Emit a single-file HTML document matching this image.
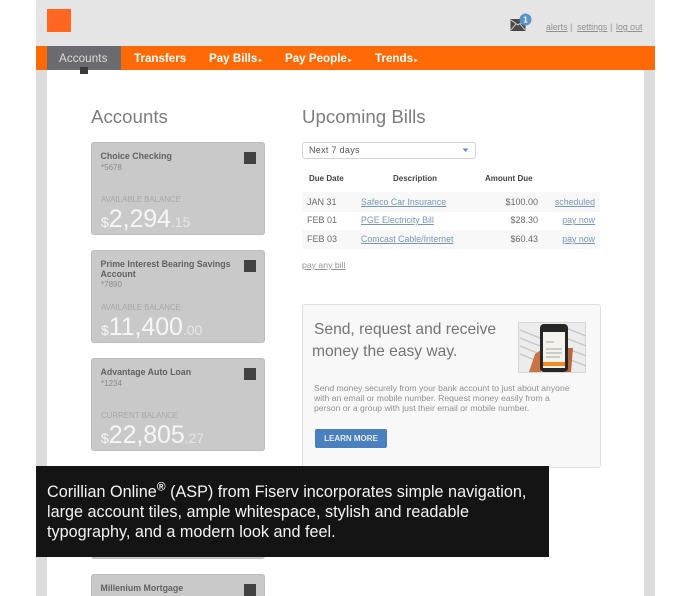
<!DOCTYPE html>
<html><head><meta charset="utf-8">
<style>
html,body{margin:0;padding:0;background:#fff;width:691px;height:596px;overflow:hidden}
#p{position:relative;width:691px;height:596px;overflow:hidden;background:#fff;font-family:"Liberation Sans",sans-serif}
#p div,#p a{position:absolute;white-space:nowrap}
a{text-decoration:underline}
.nav{font-weight:bold;font-size:11.6px;color:#fff;top:52px;line-height:14px}
.tile{left:91px;width:172px;height:91px;background:#c9c9c9;border:1px solid #bdbdbd;border-radius:3px}
.sq{left:152px;top:9px;width:12px;height:12px;background:#414141}
.nm{left:8.5px;top:9px;font-size:8.8px;font-weight:bold;color:#616161;line-height:9.5px}
.no{left:9px;font-size:8px;color:#8a8a8a;line-height:10px}
.lb{left:9px;font-size:8px;color:#a8a8a8;line-height:10px;letter-spacing:-.1px}
.am{left:9px;color:#f6f6f6;font-size:14px;line-height:28px;height:28px}
.am b{font-weight:normal;font-size:25px;letter-spacing:-.1px}
.am i{font-style:normal;font-size:14px;color:#e6e6e6}
.th{font-size:8px;font-weight:bold;color:#444;top:174px;line-height:10px}
.row{left:302px;width:298px;height:19px;background:#f8f8f8}
.c{font-size:9px;color:#6a6a6a;line-height:11px}
.l{font-size:8.8px;color:#7597bb;line-height:11px}
.t{font-size:9px;line-height:12px;color:#909090;top:21px}
</style></head><body>
<div id="p">
<div style="left:36px;top:0;width:619px;height:46px;background:#e5e5e5"></div>
<div style="left:36px;top:70px;width:11px;height:526px;background:#dcdcdc"></div>
<div style="left:644px;top:70px;width:11px;height:526px;background:#dcdcdc"></div>
<div style="left:47px;top:9px;width:24px;height:23px;background:#ff661f"></div>

<svg style="position:absolute;left:510px;top:13px" width="24" height="20" viewBox="0 0 24 20">
<rect x="0.5" y="6" width="15" height="12" fill="#4a4a4a"/>
<path d="M1 7l7 5 7-5M1 17l5-6M15 17l-5-6" fill="none" stroke="#ddd" stroke-width="0.9"/>
<circle cx="15.5" cy="6.5" r="6" fill="#5b94cb"/>
<text x="15.5" y="9.5" font-size="8" font-weight="bold" fill="#fff" text-anchor="middle" font-family="Liberation Sans">1</text>
</svg>
<a class="t" style="left:546px;font-size:8.8px">alerts</a>
<div class="t" style="left:570px">|</div>
<a class="t" style="left:577px;font-size:8.8px">settings</a>
<div class="t" style="left:610px">|</div>
<a class="t" style="left:616px;font-size:8.8px">log out</a>

<div style="left:36px;top:46px;width:619px;height:24px;background:#ff6a06"></div>
<div style="left:47px;top:46px;width:74px;height:24px;background:#6b6a6e"></div>
<div style="left:80px;top:67px;width:8px;height:7px;background:#3a3a3a"></div>
<div class="nav" style="left:59px;color:#ddd;font-weight:normal;letter-spacing:.1px">Accounts</div>
<div class="nav" style="left:134px">Transfers</div>
<div class="nav" style="left:209px">Pay Bills<span style="font-size:6px"> ▸</span></div>
<div class="nav" style="left:285px">Pay People<span style="font-size:6px"> ▸</span></div>
<div class="nav" style="left:375px">Trends<span style="font-size:6px"> ▸</span></div>

<div style="left:91px;top:104px;font-size:18.7px;line-height:25px;color:#7d7d7d">Accounts</div>
<div style="left:302px;top:104px;font-size:18.7px;line-height:25px;color:#7d7d7d">Upcoming Bills</div>

<div class="tile" style="top:142px"><div class="sq"></div><div class="nm">Choice Checking</div><div class="no" style="top:20px">*5678</div><div class="lb" style="top:52px">AVAILABLE BALANCE</div><div class="am" style="top:62px">$<b>2,294</b><i>.15</i></div></div>
<div class="tile" style="top:250px"><div class="sq"></div><div class="nm">Prime Interest Bearing Savings<br>Account</div><div class="no" style="top:29px">*7890</div><div class="lb" style="top:52px">AVAILABLE BALANCE</div><div class="am" style="top:62px">$<b>11,400</b><i>.00</i></div></div>
<div class="tile" style="top:358px"><div class="sq"></div><div class="nm">Advantage Auto Loan</div><div class="no" style="top:20px">*1234</div><div class="lb" style="top:52px">CURRENT BALANCE</div><div class="am" style="top:62px">$<b>22,805</b><i>.27</i></div></div>
<div class="tile" style="top:466px"></div>
<div class="tile" style="top:574px;height:22px;border-bottom:0;border-radius:3px 3px 0 0"><div class="sq"></div><div class="nm">Millenium Mortgage</div></div>

<div style="left:302px;top:142px;width:172px;height:15px;background:#fff;border:1px solid #d5d5d5;border-radius:3px"></div>
<div class="c" style="left:309px;top:145px;color:#555;letter-spacing:.3px">Next 7 days</div>
<svg style="position:absolute;left:462px;top:148px" width="8" height="5"><path d="M0.5 0.5h6l-3 3.5z" fill="#5b8fc4"/></svg>

<div class="th" style="left:309px">Due Date</div>
<div class="th" style="left:393px">Description</div>
<div class="th" style="left:485px">Amount Due</div>

<div class="row" style="top:192px;height:20px"></div>
<div class="row" style="top:230px"></div>
<div class="c" style="left:307px;top:197px">JAN 31</div>
<a class="l" style="left:361px;top:197px">Safeco Car Insurance</a>
<div class="c" style="right:153px;top:197px">$100.00</div>
<a class="l" style="right:96px;top:197px">scheduled</a>
<div class="c" style="left:307px;top:215px">FEB 01</div>
<a class="l" style="left:361px;top:215px">PGE Electricity Bill</a>
<div class="c" style="right:153px;top:215px">$28.30</div>
<a class="l" style="right:96px;top:215px">pay now</a>
<div class="c" style="left:307px;top:234px">FEB 03</div>
<a class="l" style="left:361px;top:234px">Comcast Cable/Internet</a>
<div class="c" style="right:153px;top:234px">$60.43</div>
<a class="l" style="right:96px;top:234px">pay now</a>
<a class="c" style="left:302px;top:260px;color:#959595;font-size:8.7px">pay any bill</a>

<div style="left:302px;top:304px;width:297px;height:162px;background:#f8f8f8;border:1px solid #dedede;border-radius:3px"></div>
<div style="left:314px;top:319px;font-size:15.6px;line-height:22px;color:#747474">Send, request and receive</div>
<div style="left:312px;top:341px;font-size:15.6px;line-height:22px;color:#747474">money the easy way.</div>
<svg style="position:absolute;left:518px;top:322px" width="68" height="51" viewBox="0 0 68 51">
<rect x=".5" y=".5" width="67" height="50" fill="#ececec" stroke="#d6d6d6"/>
<path d="M2 8l20 8M2 16l20 8M2 24l20 8M2 32l20 8M48 6l20 8M48 16l20 8M48 26l20 8M48 36l20 8" stroke="#c6c6c6" stroke-width="1.4"/>
<path d="M11 50l6-18 6-4v22z" fill="#c87443"/>
<path d="M55 26l-2 24h-5V26z" fill="#b8683c"/>
<rect x="22" y="2" width="28" height="48" rx="4" fill="#262626"/>
<rect x="25" y="10" width="22" height="36" fill="#f4f2ec"/>
<rect x="25" y="40" width="22" height="4" fill="#f08a24"/>
<path d="M28 20h8M28 27h16M28 31h16M28 35h14" stroke="#a5a5a5" stroke-width="1"/>
</svg>
<div style="left:314px;top:383px;font-size:8.65px;line-height:10px;color:#909090">Send money securely from your bank account to just about anyone<br>with an email or mobile number. Request money easily from a<br>person or a group with just their email or mobile number.</div>
<div style="left:315px;top:429px;width:72px;height:19px;background:#4a7fc0;border-radius:2px;color:#e8eef6;font-size:8px;font-weight:bold;text-align:center;line-height:19px">LEARN MORE</div>

<div style="left:36px;top:466px;width:513px;height:91px;background:#141414"></div>
<div style="left:47px;top:483px;font-size:16.2px;line-height:19.8px;color:#f4f4f4">Corillian Online<sup style="font-size:12px;line-height:0;font-weight:bold">®</sup> (ASP) from Fiserv incorporates simple navigation,<br>large account tiles, ample whitespace, stylish and readable<br>typography, and a modern look and feel.</div>
</div>
</body></html>
